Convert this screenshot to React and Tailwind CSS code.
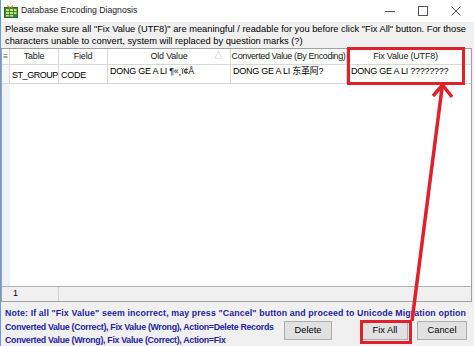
import React from "react";

const F = { fontFamily: '"Liberation Sans", "Noto Sans CJK SC", Arial, sans-serif' };

function AppIcon() {
  return (
    <svg width="14" height="13" viewBox="0 0 14 13">
      <rect x="0.5" y="2.5" width="13" height="10" fill="#3a8a3a" stroke="#2a6a2a" />
      <rect x="2" y="4" width="3" height="2" fill="#e8d84a" />
      <rect x="6" y="4" width="3" height="2" fill="#b8e0a0" />
      <rect x="10" y="4" width="2.5" height="2" fill="#e8d84a" />
      <rect x="2" y="7" width="3" height="2" fill="#b8e0a0" />
      <rect x="6" y="7" width="3" height="2" fill="#e8d84a" />
      <rect x="10" y="7" width="2.5" height="2" fill="#b8e0a0" />
      <rect x="2" y="10" width="3" height="1.5" fill="#e8d84a" />
      <rect x="6" y="10" width="3" height="1.5" fill="#b8e0a0" />
      <path d="M3 0.5 L6 2.5 M9 0.5 L7 2.5" stroke="#d4a020" strokeWidth="1.2" />
    </svg>
  );
}

export default function App() {
  const hdr = "flex items-center justify-center border-r border-[#d8d8d8] text-[9px] tracking-[-0.2px] text-[#222] whitespace-nowrap overflow-hidden";
  const cell = "flex items-start border-r border-[#d8d8d8] text-[9px] tracking-[-0.25px] text-black whitespace-nowrap overflow-hidden";
  const btn = "h-[19px] bg-[#e1e1e1] border border-[#adadad] text-[9.3px] text-black";
  return (
    <div className="relative w-[474px] h-[346px] overflow-hidden bg-[#f0f0f0] flex flex-col border-l border-[#6b9bd1]" style={F}>
      {/* title bar */}
      <div className="h-[22px] bg-white flex items-center shrink-0">
        <div className="ml-[3px] mt-[1px]"><AppIcon /></div>
        <div className="ml-[3px] text-[8.7px] text-[#222]">Database Encoding Diagnosis</div>
        <div className="ml-auto flex items-center">
          <div className="w-[33px] flex justify-center">
            <svg width="10" height="10"><line x1="0" y1="5.5" x2="10" y2="5.5" stroke="#555" strokeWidth="1" /></svg>
          </div>
          <div className="w-[33px] flex justify-center">
            <svg width="10" height="10"><rect x="0.5" y="0.5" width="9" height="9" fill="none" stroke="#555" strokeWidth="1" /></svg>
          </div>
          <div className="w-[33px] flex justify-center mr-[2px]">
            <svg width="10" height="10"><path d="M0.5 0.5 L9.5 9.5 M9.5 0.5 L0.5 9.5" stroke="#555" strokeWidth="1" /></svg>
          </div>
        </div>
      </div>

      {/* instructions */}
      <div className="px-[4px] pt-[1px] text-[9.3px] leading-[12px] text-black h-[26px] shrink-0 whitespace-nowrap">
        <div>Please make sure all "Fix Value (UTF8)" are meaningful / readable for you before click "Fix All" button. For those</div>
        <div>characters unable to convert, system will replaced by question marks (?)</div>
      </div>

      {/* grid */}
      <div className="mr-[2px] h-[254px] shrink-0 border border-[#a0a0a0] bg-white flex flex-col">
        <div className="flex h-[16px] border-b border-[#d8d8d8] bg-white">
          <div className="w-[8px] flex items-center justify-center border-r border-[#d8d8d8] text-[8px] text-[#555]">≡</div>
          <div className={hdr + " w-[49px]"}>Table</div>
          <div className={hdr + " w-[49px]"}>Field</div>
          <div className={hdr + " w-[123px] relative"}>
            Old Value
            <span className="absolute right-[8px] top-[1px] text-[8px] text-[#aaa]">△</span>
          </div>
          <div className={hdr + " w-[116px] tracking-[-0.4px]"}>Converted Value (By Encoding)</div>
          <div className={hdr + " w-[118px]"}>Fix Value (UTF8)</div>
          <div className="flex-1 bg-[#f4f4f4]" />
        </div>
        <div className="flex h-[19px] border-b border-[#d8d8d8]">
          <div className="w-[8px] border-r border-[#d8d8d8] bg-[#f4f6fa]" />
          <div className={cell + " w-[49px] pl-[2px] pt-[4px] tracking-[-0.45px]"}>ST_GROUP</div>
          <div className={cell + " w-[49px] pl-[2px] pt-[4px]"}>CODE</div>
          <div className={cell + " w-[123px] pl-[2px] pt-[0px]"}>DONG GE A LI ¶«¸ï¢Å</div>
          <div className={cell + " w-[116px] pl-[2px] pt-[0px]"}>DONG GE A LI 东革阿?</div>
          <div className={cell + " w-[118px] pl-[4px] pt-[0px]"}>DONG GE A LI ????????</div>
          <div className="flex-1" />
        </div>
        <div className="flex flex-1">
          <div className="w-[8px] bg-[#eef3f9]" />
          <div className="flex-1 bg-white" />
        </div>
        <div className="flex h-[15px] border-t border-[#b0b0b0] bg-[#f0f0f0]">
          <div className="w-[8px]" />
          <div className="w-[49px] border-r border-[#d0d0d0] text-[9px] pl-[3px] flex items-center">1</div>
          <div className="flex-1" />
        </div>
      </div>

      {/* notes */}
      <div className="px-[4px] pt-[5px] text-[8.8px] leading-[13.5px] font-bold text-[#1f1fa0] whitespace-nowrap">
        <div className="tracking-[0.12px]">Note: If all "Fix Value" seem incorrect, may press "Cancel" button and proceed to Unicode Migration option</div>
        <div className="tracking-[-0.3px]">Converted Value (Correct), Fix Value (Wrong), Action=Delete Records</div>
        <div className="tracking-[-0.3px]">Converted Value (Wrong), Fix Value (Correct), Action=Fix</div>
      </div>
      <div className="absolute left-[283px] top-[321px] flex">
        <button className={btn + " w-[48px]"} style={F}>Delete</button>
        <button className={btn + " ml-[30px] w-[46px]"} style={F}>Fix All</button>
        <button className={btn + " ml-[9px] w-[50px]"} style={F}>Cancel</button>
      </div>

      {/* red annotations */}
      <div className="absolute left-[346px] top-[47px] w-[118px] h-[38px] border-[3px] border-[#e0202a]" />
      <div className="absolute left-[359px] top-[320px] w-[52px] h-[24px] border-[3px] border-[#e0202a]" />
      <svg className="absolute left-0 top-0" width="474" height="346">
        <line x1="411" y1="321" x2="441" y2="88" stroke="#e0202a" strokeWidth="3.5" />
        <path d="M432 96 L441.5 85 L451 97" fill="none" stroke="#e0202a" strokeWidth="3.5" strokeLinejoin="miter" />
      </svg>
    </div>
  );
}
